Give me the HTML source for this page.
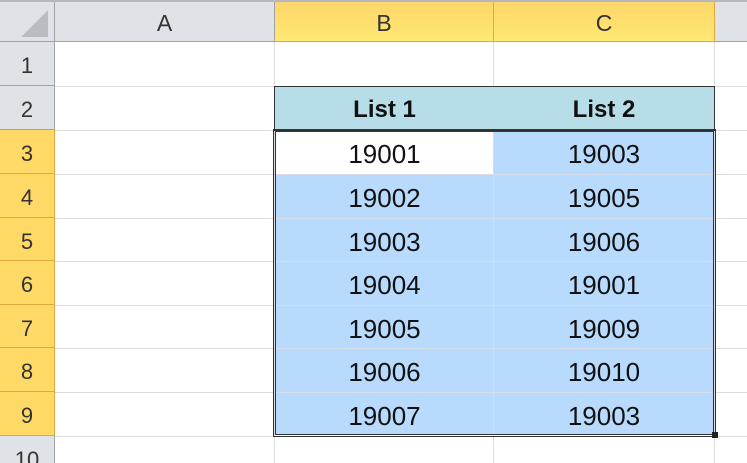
<!DOCTYPE html>
<html><head><style>
html,body{margin:0;width:747px;height:463px;overflow:hidden;background:#fff;font-family:"Liberation Sans",sans-serif;position:relative}
div{position:absolute;box-sizing:border-box}
.rh{left:0;width:55px;background:#dfe3e8;border-right:1px solid #9ea3ab;border-bottom:1px solid #9ea3ab;text-align:center;color:#333;font-size:22px}
.rh.y{background:#ffd966;border-right:1px solid #e1a83d;border-bottom:1px solid #e1a83d}
.hl{height:1px;left:55px;right:0;background:#dadcdd}
.vl{width:1px;top:42px;height:421px;background:#dadcdd}
.c{text-align:center;font-size:26px;color:#111}
</style></head><body>
<div style="left:0;top:0;width:747px;height:42px;background:#dfe3e8;border-top:2px solid #b4b8be;border-bottom:1px solid #9ea3ab"></div>
<div style="left:0;top:2px;width:55px;height:39px;border-right:1px solid #9ea3ab"></div>
<svg style="position:absolute;left:20px;top:10px" width="30" height="28"><polygon points="28,0 28,27 1,27" fill="#b9bcc0"/></svg>
<div style="left:55px;top:2px;width:220px;height:39px;border-right:1px solid #9ea3ab;text-align:center;line-height:42px;font-size:23px;color:#333">A</div>
<div style="left:275px;top:2px;width:219px;height:40px;background:linear-gradient(#fdd66a,#ffe873);border-right:1px solid #e1a83d;border-bottom:1px solid #e1a83d;text-align:center;line-height:42px;font-size:23px;color:#333">B</div>
<div style="left:494px;top:2px;width:221px;height:40px;background:linear-gradient(#fdd66a,#ffe873);border-right:1px solid #e1a83d;border-bottom:1px solid #e1a83d;text-align:center;line-height:42px;font-size:23px;color:#333">C</div>
<div class="hl" style="top:86px"></div><div class="hl" style="top:130px"></div><div class="hl" style="top:174px"></div><div class="hl" style="top:218px"></div><div class="hl" style="top:261px"></div><div class="hl" style="top:305px"></div><div class="hl" style="top:348px"></div><div class="hl" style="top:392px"></div><div class="hl" style="top:436px"></div>
<div class="vl" style="left:274px"></div><div class="vl" style="left:493px"></div><div class="vl" style="left:714px"></div>
<div class="rh" style="top:42px;height:44px;line-height:48px">1</div>
<div class="rh" style="top:86px;height:44px;line-height:48px">2</div>
<div class="rh y" style="top:130px;height:44px;line-height:48px">3</div>
<div class="rh y" style="top:174px;height:44px;line-height:48px">4</div>
<div class="rh y" style="top:218px;height:43px;line-height:47px">5</div>
<div class="rh y" style="top:261px;height:44px;line-height:48px">6</div>
<div class="rh y" style="top:305px;height:43px;line-height:47px">7</div>
<div class="rh y" style="top:348px;height:44px;line-height:48px">8</div>
<div class="rh y" style="top:392px;height:44px;line-height:48px">9</div>
<div class="rh" style="top:436px;height:27px;line-height:48px;border-bottom:none">10</div>
<div style="left:274px;top:86px;width:441px;height:45px;background:#b7dde8;border:1.5px solid #333"></div>
<div class="c" style="left:275px;top:88px;width:219px;line-height:44px;font-weight:bold;font-size:24px">List 1</div>
<div class="c" style="left:494px;top:88px;width:220px;line-height:44px;font-weight:bold;font-size:24px">List 2</div>
<div style="left:276px;top:131px;width:438px;height:304px;background:#b8dafd"></div>
<div style="left:276px;top:131px;width:217px;height:43px;background:#fff"></div>
<div style="left:493px;top:131px;width:1px;height:304px;background:#d6dde6"></div>
<div style="left:276px;top:174px;width:438px;height:1px;background:#d6dde6"></div>
<div style="left:276px;top:218px;width:438px;height:1px;background:#d6dde6"></div>
<div style="left:276px;top:261px;width:438px;height:1px;background:#d6dde6"></div>
<div style="left:276px;top:305px;width:438px;height:1px;background:#d6dde6"></div>
<div style="left:276px;top:348px;width:438px;height:1px;background:#d6dde6"></div>
<div style="left:276px;top:392px;width:438px;height:1px;background:#d6dde6"></div>
<div style="left:273px;top:129px;width:443px;height:308px;border:3px double #333"></div>
<div style="left:712px;top:432px;width:6px;height:6px;background:#222"></div>
<div class="c" style="left:275px;top:131px;width:219px;line-height:46px">19001</div><div class="c" style="left:494px;top:131px;width:220px;line-height:46px">19003</div>
<div class="c" style="left:275px;top:175px;width:219px;line-height:46px">19002</div><div class="c" style="left:494px;top:175px;width:220px;line-height:46px">19005</div>
<div class="c" style="left:275px;top:219px;width:219px;line-height:46px">19003</div><div class="c" style="left:494px;top:219px;width:220px;line-height:46px">19006</div>
<div class="c" style="left:275px;top:262px;width:219px;line-height:46px">19004</div><div class="c" style="left:494px;top:262px;width:220px;line-height:46px">19001</div>
<div class="c" style="left:275px;top:306px;width:219px;line-height:46px">19005</div><div class="c" style="left:494px;top:306px;width:220px;line-height:46px">19009</div>
<div class="c" style="left:275px;top:349px;width:219px;line-height:46px">19006</div><div class="c" style="left:494px;top:349px;width:220px;line-height:46px">19010</div>
<div class="c" style="left:275px;top:393px;width:219px;line-height:46px">19007</div><div class="c" style="left:494px;top:393px;width:220px;line-height:46px">19003</div>
</body></html>
